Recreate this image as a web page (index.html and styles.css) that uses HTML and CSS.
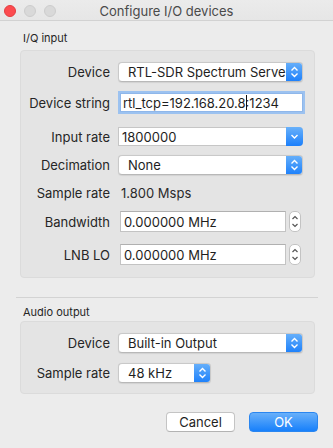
FILE: index.html
```html
<!DOCTYPE html>
<html>
<head>
<meta charset="utf-8">
<link rel="stylesheet" href="styles.css">
</head>
<body>
<div class="window">
  <div class="titlebar">
    <div class="lights">
      <span class="light red"></span>
      <span class="light off"></span>
      <span class="light off"></span>
    </div>
    <div class="title">Configure I/O devices</div>
    <div></div>
  </div>

  <div class="section-label">I/Q input</div>
  <div class="box box-iq">
    <div class="row h20">
      <div class="label">Device</div>
      <div class="popup w-full">
        <span class="popup-text">RTL-SDR Spectrum Serve</span>
        <span class="arrows"><svg width="17" height="20" viewBox="0 0 17 20"><path d="M5.5 8.5 L8.5 5.5 L11.5 8.5 M5.5 11.5 L8.5 14.5 L11.5 11.5" fill="none" stroke="#fff" stroke-width="1.4"/></svg></span>
      </div>
    </div>
    <div class="row h21 mt10">
      <div class="label">Device string</div>
      <div class="field focus w-full"><span>rtl_tcp=192.168.20.8</span><span class="caret"></span><span>:1234</span></div>
    </div>
    <div class="row h19 mt14">
      <div class="label">Input rate</div>
      <div class="combo w-full">
        <span class="combo-text">1800000</span>
        <span class="arrows"><svg width="17" height="19" viewBox="0 0 17 19"><path d="M5.5 8 L8.5 11 L11.5 8" fill="none" stroke="#fff" stroke-width="1.4"/></svg></span>
      </div>
    </div>
    <div class="row h20 mt9">
      <div class="label">Decimation</div>
      <div class="popup w-full">
        <span class="popup-text">None</span>
        <span class="arrows"><svg width="17" height="20" viewBox="0 0 17 20"><path d="M5.5 8.5 L8.5 5.5 L11.5 8.5 M5.5 11.5 L8.5 14.5 L11.5 11.5" fill="none" stroke="#fff" stroke-width="1.4"/></svg></span>
      </div>
    </div>
    <div class="row h16 mt10">
      <div class="label">Sample rate</div>
      <div class="value">1.800 Msps</div>
    </div>
    <div class="row h21 mt10">
      <div class="label">Bandwidth</div>
      <div class="spin">
        <div class="field num">0.000000 MHz</div>
        <div class="stepper"><svg width="12" height="21" viewBox="0 0 12 21"><path d="M3.5 8 L6 5.5 L8.5 8 M3.5 13 L6 15.5 L8.5 13" fill="none" stroke="#555" stroke-width="1.2"/></svg></div>
      </div>
    </div>
    <div class="row h21 mt12">
      <div class="label">LNB LO</div>
      <div class="spin">
        <div class="field num">0.000000 MHz</div>
        <div class="stepper"><svg width="12" height="21" viewBox="0 0 12 21"><path d="M3.5 8 L6 5.5 L8.5 8 M3.5 13 L6 15.5 L8.5 13" fill="none" stroke="#555" stroke-width="1.2"/></svg></div>
      </div>
    </div>
  </div>

  <div class="separator"></div>

  <div class="section-label audio">Audio output</div>
  <div class="box box-audio">
    <div class="row h20">
      <div class="label">Device</div>
      <div class="popup w-full">
        <span class="popup-text">Built-in Output</span>
        <span class="arrows"><svg width="17" height="20" viewBox="0 0 17 20"><path d="M5.5 8.5 L8.5 5.5 L11.5 8.5 M5.5 11.5 L8.5 14.5 L11.5 11.5" fill="none" stroke="#fff" stroke-width="1.4"/></svg></span>
      </div>
    </div>
    <div class="row h20 mt10">
      <div class="label">Sample rate</div>
      <div class="popup w-small">
        <span class="popup-text">48 kHz</span>
        <span class="arrows"><svg width="17" height="20" viewBox="0 0 17 20"><path d="M5.5 8.5 L8.5 5.5 L11.5 8.5 M5.5 11.5 L8.5 14.5 L11.5 11.5" fill="none" stroke="#fff" stroke-width="1.4"/></svg></span>
      </div>
    </div>
  </div>

  <div class="buttons">
    <div class="btn cancel">Cancel</div>
    <div class="btn ok">OK</div>
  </div>
</div>
</body>
</html>
```

FILE: styles.css
```css
html, body {
  margin: 0;
  padding: 0;
}
body {
  background: #ececec;
  font-family: Inter, "Liberation Sans", "DejaVu Sans", sans-serif;
  font-size: 13px;
  color: #242424;
}
.window {
  width: 333px;
  height: 448px;
  overflow: hidden;
  background: #ececec;
}
.titlebar {
  height: 20px;
  border-bottom: 1px solid #d2d2d2;
  background: linear-gradient(#ebebeb, #e6e6e6);
  display: grid;
  grid-template-columns: 1fr auto 1fr;
  align-items: center;
}
.lights {
  display: flex;
  gap: 8px;
  padding-left: 4px;
  padding-top: 1px;
}
.light {
  width: 12px;
  height: 12px;
  border-radius: 50%;
  box-sizing: border-box;
}
.light.red {
  background: #fc4b4f;
  border: 1px solid #e33d40;
}
.light.off {
  background: #d9d9d9;
  border: 1px solid #cdcdcd;
}
.title {
  font-size: 13px;
  color: #4a4a4a;
  padding-top: 1px;
}
.section-label {
  font-size: 11px;
  line-height: 14px;
  height: 14px;
  margin: 10px 0 5px 23px;
  color: #262626;
}
.section-label.audio {
  margin: 7px 0 2px 23px;
}
.box {
  margin: 0 18px 0 20px;
  background: #e4e4e4;
  border: 1px solid #dbdbdb;
  border-radius: 4px;
  padding: 11px 0 12px 0;
}
.box-audio {
  padding: 11px 0 10px 0;
}
.row {
  display: flex;
  align-items: center;
}
.h16 { height: 16px; }
.h19 { height: 19px; }
.h20 { height: 20px; }
.h21 { height: 21px; }
.mt9 { margin-top: 9px; }
.mt10 { margin-top: 10px; }
.mt12 { margin-top: 12px; }
.mt14 { margin-top: 14px; }
.label {
  width: 89px;
  text-align: right;
  margin-right: 8px;
  color: #262626;
  flex: none;
}
.value {
  padding-left: 3px;
  color: #2a2a2a;
}
.w-full { width: 185px; }
.w-small { width: 93px; }
.popup {
  height: 20px;
  box-sizing: border-box;
  background: #fff;
  border: 1px solid #c9c9c9;
  border-bottom-color: #b8b8b8;
  border-radius: 4px;
  display: flex;
  align-items: center;
  box-shadow: 0 0.5px 1px rgba(0,0,0,0.08);
  overflow: hidden;
}
.popup-text {
  flex: 1;
  padding-left: 9px;
  white-space: nowrap;
  overflow: hidden;
  color: #1e1e1e;
}
.arrows {
  flex: none;
  width: 17px;
  align-self: stretch;
  margin: -1px -1px -1px 0;
  background: linear-gradient(#69b1fa, #1b7ffb);
  border-radius: 0 4px 4px 0;
  display: flex;
  align-items: center;
  justify-content: center;
}
.combo {
  height: 19px;
  box-sizing: border-box;
  background: #fff;
  border: 1px solid #c6c6c6;
  border-right: none;
  border-radius: 0 4px 4px 0;
  display: flex;
  align-items: center;
}
.combo .arrows {
  height: 19px;
  margin: -1px 0;
}
.combo-text {
  flex: 1;
  padding-left: 3px;
  color: #1e1e1e;
}
.field {
  height: 21px;
  box-sizing: border-box;
  background: #fff;
  border: 1px solid #c3c3c3;
  border-top-color: #b0b0b0;
  display: flex;
  align-items: center;
  padding-left: 3px;
  color: #1e1e1e;
  white-space: nowrap;
}
.field.focus {
  margin-left: 2px;
  width: 183px;
  height: 19px;
  border-color: #8fb7ea;
  box-shadow: 0 0 0 2px #9cc2f0;
  padding-left: 2px;
}
.caret {
  width: 1px;
  height: 15px;
  background: #111;
  margin: 0 -1px 0 0;
}
.spin {
  display: flex;
  align-items: center;
  padding-left: 2px;
}
.field.num {
  width: 166px;
}
.stepper {
  width: 12px;
  height: 21px;
  margin-left: 3px;
  box-sizing: border-box;
  background: #fff;
  border: 1px solid #c3c3c3;
  border-radius: 5px;
  display: flex;
  align-items: center;
  justify-content: center;
  overflow: hidden;
}
.stepper svg { flex: none; }
.separator {
  height: 1px;
  background: #d3d3d3;
  margin: 19px 15px 0 16px;
}
.buttons {
  display: flex;
  justify-content: flex-end;
  gap: 14px;
  margin: 18px 15px 0 0;
}
.btn {
  width: 69px;
  height: 20px;
  box-sizing: border-box;
  border-radius: 4px;
  display: flex;
  align-items: center;
  justify-content: center;
  font-size: 13px;
}
.btn.cancel {
  background: #fff;
  border: 1px solid #c4c4c4;
  border-bottom-color: #b3b3b3;
  color: #1e1e1e;
}
.btn.ok {
  background: linear-gradient(#68b0fa, #1780fb);
  color: #fff;
  border: 1px solid #2a86f0;
}
```
